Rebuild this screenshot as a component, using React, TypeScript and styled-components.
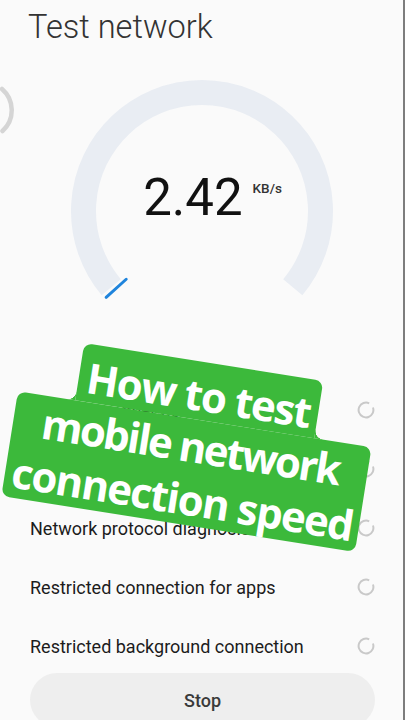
import React from "react";
import styled, { createGlobalStyle } from "styled-components";

const Global = createGlobalStyle`
  html, body { margin: 0; padding: 0; overflow: hidden; background: #fafafa; }
  * { box-sizing: border-box; }
`;

const Page = styled.div`
  position: relative;
  width: 405px;
  height: 720px;
  overflow: hidden;
  background: #fafafa;
  border-right: 2px solid #7d7d7d;
  font-family: Roboto, "Liberation Sans", sans-serif;
  display: flex;
  flex-direction: column;
`;

const Title = styled.h1`
  margin: 7px 0 0 28px;
  font-family: Roboto, "Liberation Sans", sans-serif;
  font-weight: 300;
  font-size: 32.6px;
  line-height: 40px;
  color: #333;
`;

const SideArc = styled.svg`
  position: absolute;
  left: 0;
  top: 84px;
`;

const Gauge = styled.div`
  display: grid;
  justify-content: center;
  margin-top: 33px;
`;

const Dial = styled.svg`
  grid-area: 1 / 1;
  display: block;
`;

const Reading = styled.div`
  grid-area: 1 / 1;
  justify-self: center;
  align-self: start;
  margin-top: 92px;
  margin-left: 22px;
  display: flex;
  align-items: flex-start;
`;

const Value = styled.span`
  font-size: 51px;
  line-height: 51px;
  font-weight: 400;
  color: #111;
`;

const Unit = styled.span`
  margin: 8px 0 0 10px;
  font-size: 13.5px;
  line-height: 16px;
  font-weight: 500;
  color: #333;
`;

const List = styled.div`
  margin-top: 71px;
  display: flex;
  flex-direction: column;
`;

const Row = styled.div`
  height: 59px;
  display: flex;
  align-items: center;
  justify-content: space-between;
  padding: 0 28px 0 30px;
`;

const Label = styled.span`
  font-size: 18px;
  color: #1c1c1c;
`;

const Spinner = styled.svg`
  display: block;
  margin-top: -2px;
`;

const StopButton = styled.button`
  margin: -3px 28px 0 30px;
  height: 54px;
  flex: none;
  border: none;
  border-radius: 27px;
  background: #eeeeee;
  font-family: Roboto, "Liberation Sans", sans-serif;
  font-size: 18px;
  font-weight: 500;
  color: #3a3a3a;
`;

const Banner = styled.div`
  position: absolute;
  left: 27px;
  top: 334px;
  transform-origin: 0 0;
  transform: rotate(9deg);
  display: flex;
  flex-direction: column;
  align-items: center;
  font-family: "Open Sans", "Noto Sans", sans-serif;
  font-weight: 700;
  font-size: 42px;
  letter-spacing: -1.5px;
  color: #fff;
  white-space: nowrap;
`;

const green = "#3cb93b";

const TopLine = styled.div`
  position: relative;
  background: ${green};
  padding: 8px 8px 0;
  line-height: 50px;
  border-radius: 8px 8px 0 0;
  &::before, &::after {
    content: "";
    position: absolute;
    bottom: 0;
    width: 8px;
    height: 8px;
  }
  &::before {
    left: -8px;
    background: radial-gradient(circle at top left, transparent 7.5px, ${green} 8px);
  }
  &::after {
    right: -8px;
    background: radial-gradient(circle at top right, transparent 7.5px, ${green} 8px);
  }
`;

const Block = styled.div`
  background: ${green};
  padding: 0 7px;
  line-height: 53px;
  text-align: center;
  border-radius: 8px;
`;

const TextLine = styled.div<{ $spacing: number }>`
  letter-spacing: ${(p) => p.$spacing}px;
`;

function SpinIcon() {
  return (
    <Spinner width="18" height="18" viewBox="0 0 18 18">
      <circle
        cx="9"
        cy="9"
        r="7.4"
        fill="none"
        stroke="#c9c9c9"
        strokeWidth="2"
        strokeDasharray="40.5 6"
        transform="rotate(-20 9 9)"
      />
    </Spinner>
  );
}

function polar(cx: number, cy: number, r: number, deg: number) {
  const a = (deg * Math.PI) / 180;
  return [cx + r * Math.cos(a), cy + r * Math.sin(a)];
}

function DialArc() {
  const cx = 135;
  const cy = 131;
  const r = 118.5;
  const [sx, sy] = polar(cx, cy, r, 140);
  const [ex, ey] = polar(cx, cy, r, 40);
  const [b1x, b1y] = polar(cx, cy, 102, 138);
  const [b2x, b2y] = polar(cx, cy, 129, 138);
  return (
    <Dial width="270" height="230" viewBox="0 0 270 230">
      <path
        d={`M ${sx} ${sy} A ${r} ${r} 0 1 1 ${ex} ${ey}`}
        fill="none"
        stroke="#e9edf3"
        strokeWidth="25"
      />
      <line x1={b1x} y1={b1y} x2={b2x} y2={b2y} stroke="#1f84dc" strokeWidth="3" strokeLinecap="round" />
    </Dial>
  );
}

const rows = [
  "Network connection",
  "DNS resolution",
  "Network protocol diagnosis",
  "Restricted connection for apps",
  "Restricted background connection",
];

export default function App() {
  return (
    <>
      <Global />
      <Page>
        <Title>Test network</Title>
        <SideArc width="16" height="52" viewBox="0 0 16 52">
          <path d="M 2 5 A 28 28 0 0 1 2.5 47" fill="none" stroke="#d5d5d5" strokeWidth="4.5" strokeLinecap="round" />
        </SideArc>
        <Gauge>
          <DialArc />
          <Reading>
            <Value>2.42</Value>
            <Unit>KB/s</Unit>
          </Reading>
        </Gauge>
        <List>
          {rows.map((r) => (
            <Row key={r}>
              <Label>{r}</Label>
              <SpinIcon />
            </Row>
          ))}
        </List>
        <StopButton>Stop</StopButton>
        <Banner>
          <TopLine>How to test</TopLine>
          <Block>
            <TextLine $spacing={-2.3}>mobile network</TextLine>
            <TextLine $spacing={-1.5}>connection speed</TextLine>
          </Block>
        </Banner>
      </Page>
    </>
  );
}
